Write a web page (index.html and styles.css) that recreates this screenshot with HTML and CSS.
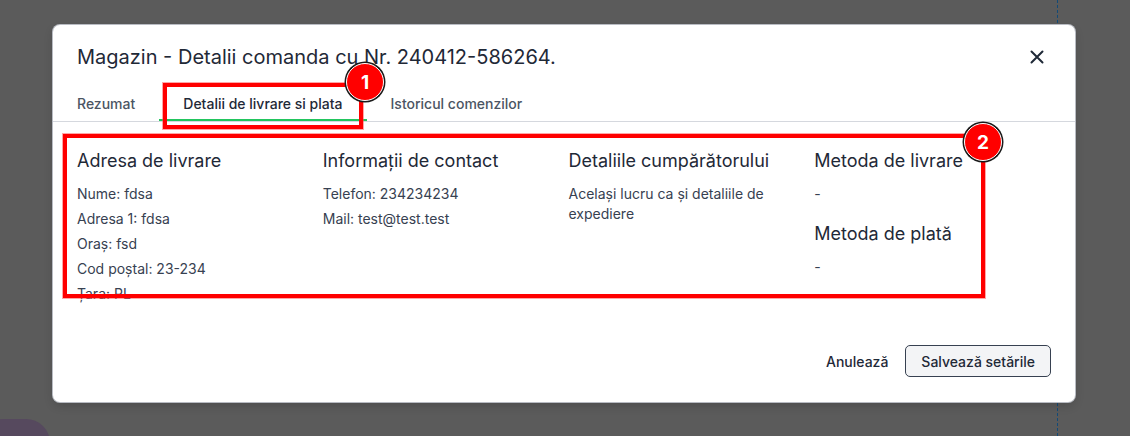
FILE: index.html
```html
<!DOCTYPE html>
<html lang="ro">

<head>
    <meta charset="UTF-8" />
    <meta name="viewport" content="width=device-width, initial-scale=1.0" />
    <title>Detalii comanda</title>
    <link rel="stylesheet" href="styles.css">
</head>

<body>
    <div class="backdrop">
        <div class="guide-line"></div>
        <div class="corner-blob"></div>

        <!-- Order modal -->
        <div class="modal">
            <div class="modal-header">
                <h1>Magazin - Detalii comanda cu Nr. 240412-586264.</h1>
                <button class="close-btn" aria-label="Close">
                    <svg width="14" height="14" viewBox="0 0 14 14">
                        <path d="M1.5 1.5 L12.5 12.5 M12.5 1.5 L1.5 12.5" stroke="#1f2937" stroke-width="2" stroke-linecap="round" fill="none" />
                    </svg>
                </button>
            </div>

            <div class="tabs">
                <div class="tab">Rezumat</div>
                <div class="tab active">Detalii de livrare si plata</div>
                <div class="tab">Istoricul comenzilor</div>
            </div>

            <div class="modal-body">
                <div class="info-col">
                    <h3>Adresa de livrare</h3>
                    <p>Nume: fdsa</p>
                    <p>Adresa 1: fdsa</p>
                    <p>Oraș: fsd</p>
                    <p>Cod poștal: 23-234</p>
                    <p>Țara: PL</p>
                </div>
                <div class="info-col">
                    <h3>Informații de contact</h3>
                    <p>Telefon: 234234234</p>
                    <p>Mail: test@test.test</p>
                </div>
                <div class="info-col">
                    <h3>Detaliile cumpărătorului</h3>
                    <p>Același lucru ca și detaliile de expediere</p>
                </div>
                <div class="info-col">
                    <div class="info-group">
                        <h3>Metoda de livrare</h3>
                        <p>-</p>
                    </div>
                    <div class="info-group">
                        <h3>Metoda de plată</h3>
                        <p>-</p>
                    </div>
                </div>
            </div>

            <div class="modal-footer">
                <button class="btn-link">Anulează</button>
                <button class="btn-outline">Salvează setările</button>
            </div>

            <!-- Annotations -->
            <div class="mark mark-tab"></div>
            <div class="mark mark-body"></div>
            <div class="badge badge-one">1</div>
            <div class="badge badge-two">2</div>
        </div>
    </div>
</body>

</html>
```

FILE: styles.css
```css
body {
    margin: 0;
    font-family: Inter, "Noto Sans", sans-serif;
    color: #1f2937;
}

.backdrop {
    position: relative;
    height: 436px;
    overflow: hidden;
    background-color: #5b5b5b;
    padding: 25px 0 0 53px;
    box-sizing: border-box;
}

.guide-line {
    position: absolute;
    left: 1057px;
    top: 0;
    bottom: 0;
    width: 0;
    border-left: 1px dashed #124a78;
}

.corner-blob {
    position: absolute;
    left: -20px;
    top: 419px;
    width: 70px;
    height: 60px;
    border-radius: 24px;
    background-color: #56495e;
}

.modal {
    position: relative;
    width: 1022px;
    height: 377px;
    box-sizing: border-box;
    background-color: white;
    border-radius: 7px;
    box-shadow: 0 0 0 1px rgba(210, 214, 222, 0.8), 0 4px 10px rgba(0, 0, 0, 0.15);
    display: flex;
    flex-direction: column;
}

.modal-header {
    display: flex;
    align-items: center;
    justify-content: space-between;
    padding: 18px 26px 0 24px;
    margin-bottom: 10px;
}

.modal-header h1 {
    margin: 0;
    font-size: 20px;
    line-height: 28px;
    font-weight: 400;
    color: #1f2937;
}

.close-btn {
    width: 24px;
    height: 24px;
    padding: 0;
    border: none;
    background: none;
    display: flex;
    align-items: center;
    justify-content: center;
    cursor: pointer;
}

.tabs {
    display: flex;
    border-bottom: 1px solid #d5d8de;
}

.tab {
    padding: 13px 24px 5px;
    font-size: 14px;
    line-height: 20px;
    font-weight: 500;
    color: #4b5563;
    border-bottom: 2px solid transparent;
    cursor: pointer;
}

.tab.active {
    color: #1f2937;
    border-bottom-color: #22c55e;
}

.modal-body {
    display: grid;
    grid-template-columns: repeat(4, 1fr);
    column-gap: 16px;
    padding: 25px 31px 22px 24px;
    flex: 1;
    align-items: start;
}

.info-col h3 {
    margin: 0 0 9px;
    font-size: 18px;
    line-height: 28px;
    font-weight: 400;
    color: #1f2937;
}

.info-col p {
    margin: 0 0 5px;
    font-size: 14px;
    line-height: 20px;
    color: #374151;
}

.info-group {
    margin-bottom: 16px;
}

.modal-footer {
    display: flex;
    justify-content: flex-end;
    align-items: center;
    padding: 0 24px 25px 24px;
}

.btn-link {
    padding: 0 16px;
    margin-right: 1px;
    height: 32px;
    border: none;
    background: none;
    font-family: inherit;
    font-size: 14px;
    font-weight: 500;
    color: #1f2937;
    cursor: pointer;
}

.btn-outline {
    height: 32px;
    padding: 0 15px;
    border: 1px solid #374151;
    border-radius: 5px;
    background-color: #f3f4f6;
    font-family: inherit;
    font-size: 14px;
    font-weight: 500;
    color: #1f2937;
    cursor: pointer;
}

/* annotation overlay */
.mark {
    position: absolute;
    border: 4px solid #ff0000;
    box-shadow: 0 0 0 1px rgba(255, 80, 80, 0.5);
    pointer-events: none;
}

.mark-tab {
    left: 110px;
    top: 58px;
    width: 192px;
    height: 38px;
}

.mark-body {
    left: 10px;
    top: 109px;
    width: 914px;
    height: 156px;
}

.badge {
    position: absolute;
    width: 36px;
    height: 36px;
    border-radius: 50%;
    background-color: #ff0000;
    border: 1.5px solid white;
    box-shadow: 0 0 0 1.5px #1a1a1a;
    color: white;
    font-size: 19px;
    font-weight: 700;
    display: flex;
    align-items: center;
    justify-content: center;
}

.badge-one {
    left: 293px;
    top: 38px;
}

.badge-two {
    left: 911px;
    top: 98px;
}
```
